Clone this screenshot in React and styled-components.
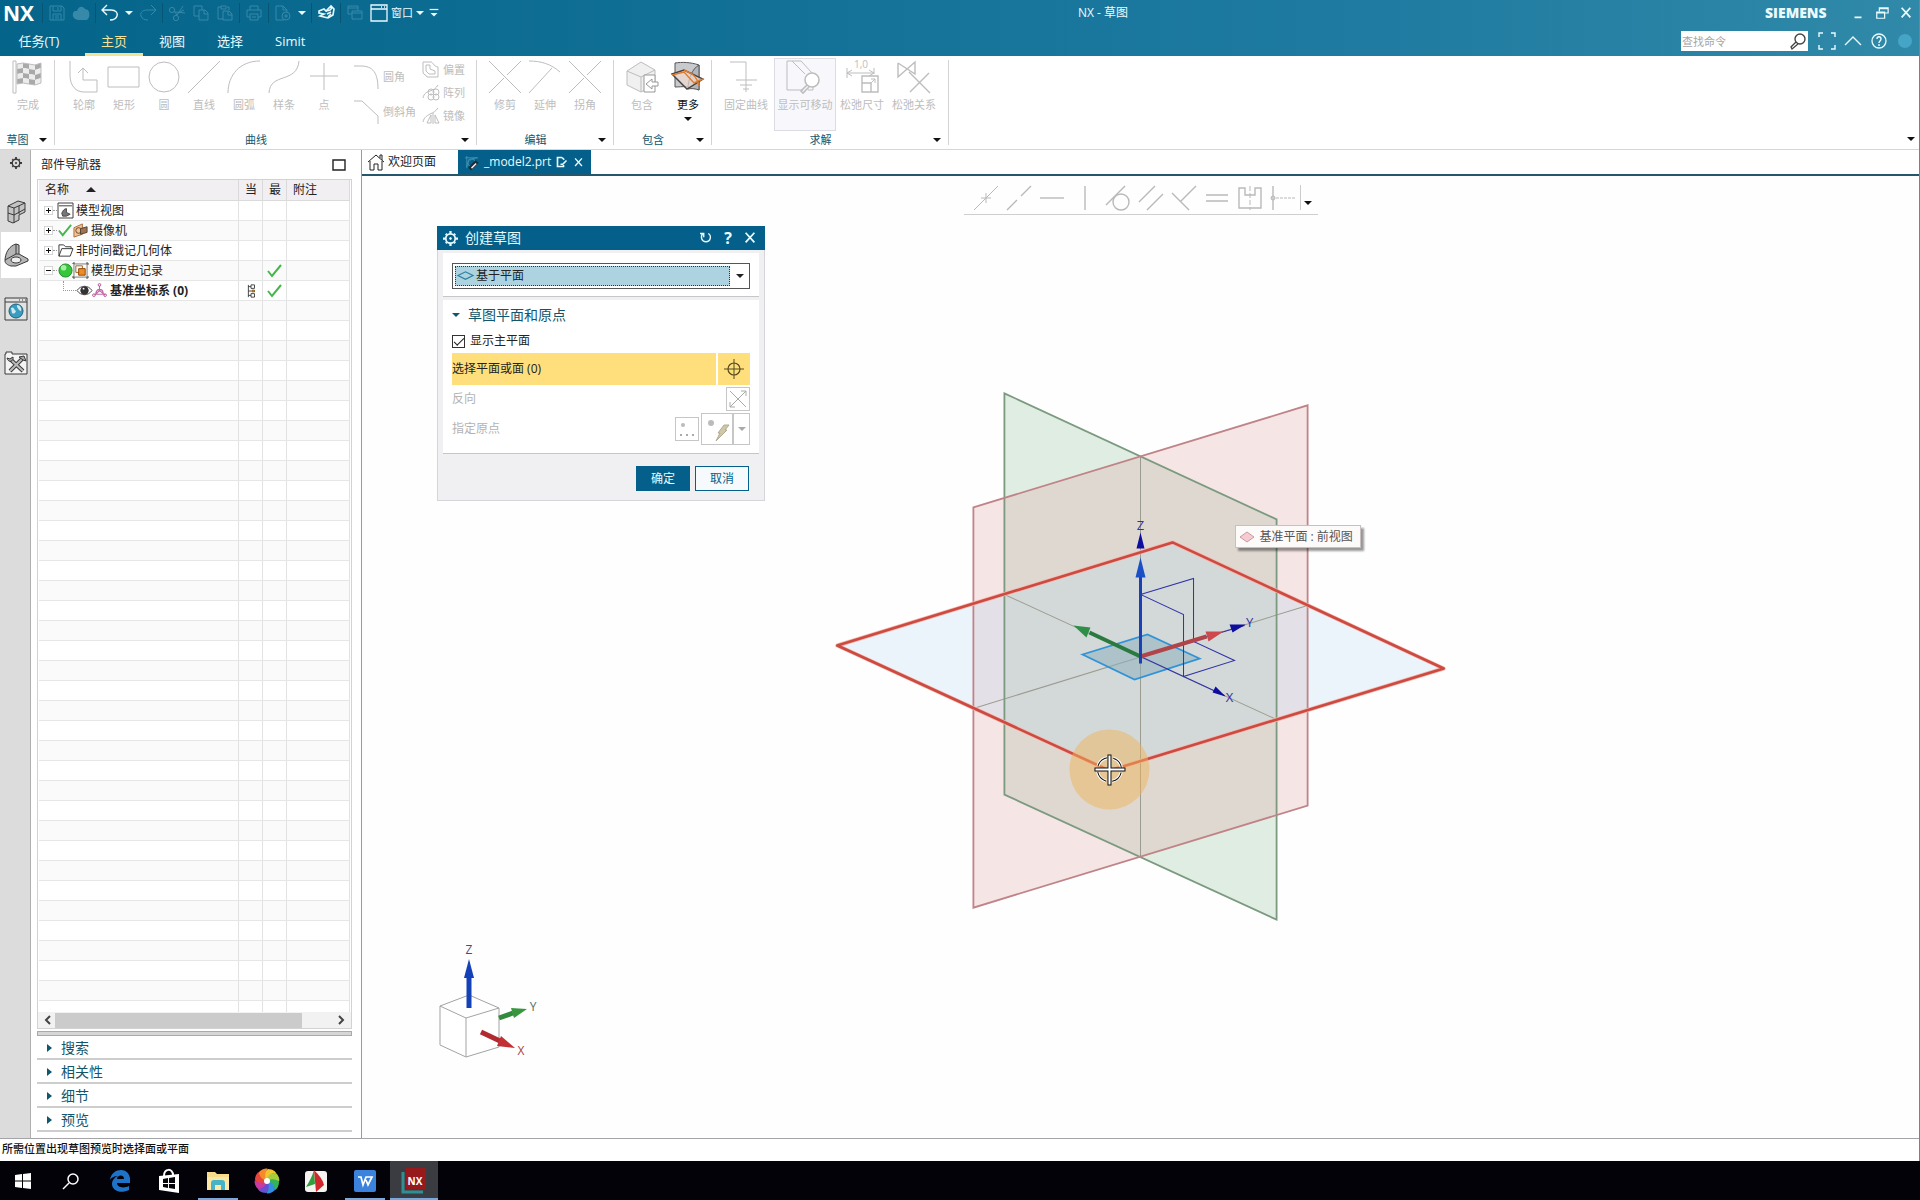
import React, { useState } from 'react';
import styled, { createGlobalStyle } from 'styled-components';

const GlobalStyle = createGlobalStyle`
* {
    box-sizing: border-box;
}
body {
    margin: 0;
    font-family: "Open Sans", "Noto Sans CJK SC", sans-serif;
    font-size: 12px;
    line-height: 16px;
    color: #222;
    background-color: #fff;
    overflow: hidden;
}
button, input, select {
    font: inherit;
    color: inherit;
}
button {
    border: none;
    background: none;
    padding: 0;
    margin: 0;
}
`

const Shell = styled.div`
display: flex;
flex-direction: column;
height: 100vh;
`
const Window = styled.div`
flex: 1;
min-height: 0;
display: flex;
flex-direction: column;
border-right: 1px solid #6d8791;
`

const Glyph = styled.svg`
display: block;
flex: none;
width: ${props => props.$w || 16}px;
height: ${props => props.$h || props.$w || 16}px;
fill: none;
stroke: currentColor;
stroke-width: ${props => props.$stroke || 1};
overflow: visible;
`

const CaretShape = styled.span`
display: block;
flex: none;
border: 4px solid transparent;
border-top-color: currentColor;
border-bottom: none;
`

/* ---------- header ---------- */

const Header = styled.header`
padding-right: 1px;
background: linear-gradient(90deg, #04648a 0%, #0d6c92 25%, #1f7ba1 72%, #3089a8 100%);
color: #e9fbff;
`
const TitleBar = styled.div`
display: flex;
align-items: center;
height: 26px;
`
const Logo = styled.div`
width: 40px;
padding-left: 3px;
font-size: 21px;
line-height: 26px;
font-weight: 700;
color: #fff;
`
const QuickButton = styled.button`
display: flex;
align-items: center;
justify-content: center;
width: ${props => props.$narrow ? 14 : 24}px;
height: 26px;
color: ${props => props.disabled ? '#3789aa' : '#e9fbff'};
`
const QuickLabel = styled.button`
height: 26px;
font-size: 11px;
`
const QuickSeparator = styled.span`
width: 1px;
height: 20px;
margin: 0 2px;
background-color: #075473;
`
const WindowTitle = styled.div`
flex: 1;
text-align: center;
`
const Brand = styled.div`
width: 81px;
font-size: 14px;
line-height: 26px;
font-weight: 800;
`
const MenuBar = styled.div`
display: flex;
align-items: stretch;
height: 30px;
padding-left: 3px;
`
const FileMenu = styled.button`
width: 72px;
margin-right: 10px;
font-size: 13px;
`
const MenuTab = styled.button`
padding: 2px 16px 0;
font-size: 13px;
border-bottom: 3px solid ${props => props.$active ? '#f3e29a' : 'transparent'};
color: ${props => props.$active ? '#f3e29a' : 'inherit'};
`
const HeaderTools = styled.div`
display: flex;
align-items: center;
margin-left: auto;
`
const SearchBox = styled.label`
display: flex;
align-items: center;
width: 127px;
height: 20px;
margin-right: 6px;
padding-right: 2px;
background-color: #fff;
color: #444;
`
const SearchInput = styled.input`
flex: 1;
min-width: 0;
height: 20px;
padding: 0 1px;
border: none;
outline: none;
background: none;
font-size: 11px;
&::placeholder {
    color: #a5a5a5;
}
`
const HeaderButton = styled.button`
display: flex;
align-items: center;
justify-content: center;
width: ${props => props.$w}px;
height: 26px;
`

/* ---------- ribbon ---------- */

const Ribbon = styled.div`
display: flex;
height: 94px;
border-bottom: 1px solid #d6d6d6;
background-color: #fff;
`
const RibbonGroup = styled.section`
position: relative;
display: flex;
flex-direction: column;
padding-top: 2px;
&::after {
    content: '';
    position: absolute;
    right: 0;
    top: 4px;
    bottom: 4px;
    width: 1px;
    background-color: #d4d4d4;
}
`
const GroupContent = styled.div`
display: flex;
flex: 1;
padding: 0 ${props => props.$right}px 0 ${props => props.$left}px;
`
const GroupFooter = styled.div`
display: flex;
align-items: center;
height: 18px;
padding-right: 4px;
font-size: 11px;
color: #10566c;
`
const GroupName = styled.span`
flex: 1;
text-align: center;
`
const GroupCaret = styled.button`
display: flex;
justify-content: center;
width: 16px;
color: #111;
`
const BigButton = styled.button`
display: flex;
flex-direction: column;
align-items: center;
gap: 4px;
width: ${props => props.$w || 40}px;
padding-top: 3px;
font-size: 11px;
white-space: nowrap;
color: ${props => props.$live ? '#111' : '#bdbdbd'};
outline: ${props => props.$boxed ? '1px solid #dcdce4' : 'none'};
outline-offset: -1px;
background-color: ${props => props.$boxed ? '#f8f8fc' : 'transparent'};
`
const SmallColumn = styled.div`
display: flex;
flex-direction: column;
justify-content: ${props => props.$top ? 'flex-start' : 'center'};
margin-left: 7px;
`
const SmallButton = styled.button`
display: flex;
align-items: center;
gap: 4px;
height: ${props => props.$tall ? 35 : 23}px;
font-size: 11px;
color: #bdbdbd;
`
const RibbonEnd = styled.div`
display: flex;
flex: 1;
align-items: flex-end;
justify-content: flex-end;
padding-bottom: 8px;
`

/* ---------- body ---------- */

const Body = styled.div`
flex: 1;
min-height: 0;
display: flex;
`
const Rail = styled.nav`
width: 31px;
background-color: #dcdcdc;
border-right: 1px solid #b0b0b0;
`
const RailButton = styled.button`
display: flex;
align-items: center;
justify-content: center;
width: ${props => props.$active ? 30 : 28}px;
height: ${props => props.$h}px;
margin-left: ${props => props.$active ? 1 : 2}px;
margin-top: ${props => props.$gap || 0}px;
background-color: ${props => props.$active ? '#fff' : 'transparent'};
color: #3a3a3a;
`
const Panel = styled.aside`
display: flex;
flex-direction: column;
width: 331px;
padding: 0 9px 6px 6px;
border-right: 1px solid #9a9aa2;
`
const PanelHeader = styled.div`
display: flex;
align-items: center;
justify-content: space-between;
height: 29px;
padding: 0 7px 0 4px;
`
const TreeBox = styled.div`
flex: 1;
min-height: 0;
overflow: hidden;
border: 1px solid #d2d2d2;
border-bottom: none;
padding: 0 1px;
`
const TreeTable = styled.table`
width: 100%;
table-layout: fixed;
border-collapse: separate;
border-spacing: 0;
`
const Th = styled.th`
height: 21px;
padding: 0 0 0 6px;
font-weight: 400;
text-align: left;
background-color: #f1eff1;
border-right: 1px solid #dadada;
border-bottom: 1px solid #dadada;
`
const Tr = styled.tr`
background-color: ${props => props.$even ? '#fafafa' : '#fff'};
`
const Td = styled.td`
height: 20px;
padding: 0;
border-right: 1px solid #e2e2e2;
border-bottom: 1px solid #e6e6e6;
`
const CellIcon = styled.div`
display: flex;
justify-content: center;
`
const NodeCell = styled.div`
display: flex;
align-items: center;
height: 19px;
padding-left: ${props => props.$child ? 24 : 5}px;
white-space: nowrap;
font-weight: ${props => props.$child ? 700 : 400};
`
const Expander = styled.button`
width: 9px;
height: 9px;
border: 1px solid #d5d5d5;
background-color: #fff;
display: flex;
align-items: center;
justify-content: center;
`
const DotLine = styled.span`
width: ${props => props.$w}px;
margin-right: 1px;
height: ${props => props.$elbow ? 10 : 1}px;
border-bottom: 1px dotted #999;
border-left: ${props => props.$elbow ? '1px dotted #999' : 'none'};
align-self: ${props => props.$elbow ? 'flex-start' : 'center'};
`
const NodeText = styled.span`
margin-left: 3px;
`
const SortMark = styled.span`
display: inline-block;
margin-left: 17px;
vertical-align: 2px;
border: 5px solid transparent;
border-bottom-color: #222;
border-top: none;
`
const ScrollTrack = styled.div`
display: flex;
align-items: center;
height: 17px;
padding: 0 3px;
border: 1px solid #d2d2d2;
border-top: none;
background-color: #f2f2f2;
color: #444;
`
const ScrollThumb = styled.div`
width: 247px;
height: 15px;
margin: 0 auto 0 0;
background-color: #cbcbcb;
`
const ScrollArrow = styled.button`
display: flex;
justify-content: center;
width: 14px;
`
const Splitter = styled.div`
height: 5px;
margin: 2px 0 0;
border: 1px solid #aaa;
background-color: #d6d6d6;
`
const Fold = styled.button`
display: flex;
align-items: center;
gap: 9px;
height: 24px;
padding: 2px 0 0 10px;
border-bottom: 2px solid #cdcdcd;
font-size: 14px;
color: #10566c;
`
const FoldMark = styled.span`
border: 4px solid transparent;
border-left: 5px solid #10566c;
border-right: none;
`

const Main = styled.main`
flex: 1;
min-width: 0;
display: flex;
flex-direction: column;
`
const FileTabs = styled.div`
display: flex;
height: 26px;
border-bottom: 2px solid #24566c;
`
const FileTab = styled.a`
display: flex;
align-items: center;
gap: ${props => props.$active ? 5 : 4}px;
padding: 0 ${props => props.$active ? 7 : 22}px 0 6px;
text-decoration: none;
color: ${props => props.$active ? '#e9fbff' : '#222'};
background-color: ${props => props.$active ? '#04608a' : 'transparent'};
`
const Canvas = styled.div`
position: relative;
flex: 1;
min-height: 0;
background-color: #fefefe;
`
const Scene = styled.svg`
position: absolute;
inset: 0;
width: 100%;
height: 100%;
`
const Triad = styled.svg`
position: absolute;
left: 68px;
bottom: 73px;
width: 120px;
height: 130px;
`
const ConstraintBar = styled.div`
position: relative;
display: flex;
align-items: center;
width: 354px;
height: 34px;
margin: 5px auto 0;
padding-left: 6px;
border-bottom: 1px solid #cfcfcf;
`
const ConstraintButton = styled.button`
display: flex;
justify-content: center;
width: 33px;
color: #b9b9b9;
`
const ConstraintMore = styled.button`
display: flex;
align-items: flex-end;
width: 13px;
height: 25px;
padding: 0 0 5px 3px;
border-left: 1px solid #ccc;
color: #111;
`
const Tooltip = styled.div`
position: absolute;
left: 56.1%;
top: 349px;
display: flex;
align-items: center;
gap: 4px;
height: 23px;
padding: 0 7px 0 3px;
border: 1px solid #c8c0c0;
background-color: #fdfafa;
box-shadow: 3px 3px 2px rgba(0, 0, 0, 0.4);
color: #555;
white-space: nowrap;
`

/* ---------- dialog ---------- */

const Dialog = styled.form`
position: absolute;
left: 75px;
top: 50px;
width: 328px;
border: 1px solid #d4d4da;
border-top: none;
background-color: #f0eff2;
`
const DialogTitle = styled.div`
display: flex;
align-items: center;
height: 24px;
margin: 0 -1px;
padding: 0 4px 0 6px;
background-color: #04608a;
color: #e9fbff;
font-size: 14px;
`
const DialogName = styled.span`
flex: 1;
margin-left: 7px;
`
const DialogTool = styled.button`
display: flex;
align-items: center;
justify-content: center;
width: 22px;
height: 24px;
font-size: 16px;
font-weight: 700;
`
const Card = styled.div`
margin: 3px 5px 0;
padding: ${props => props.$pad};
background-color: #fff;
border-bottom: 1px solid #c6c6ca;
`
const Combo = styled.div`
position: relative;
display: flex;
align-items: center;
height: 26px;
padding: 2px 5px 2px 2px;
border: 1px solid #555;
`
const ComboSelect = styled.select`
flex: 1;
height: 20px;
margin-right: 6px;
padding: 0 0 0 20px;
appearance: none;
border: 1px dotted #333;
border-radius: 0;
outline: none;
background-color: #add3e0;
color: #222;
`
const ComboIcon = styled.span`
position: absolute;
left: 5px;
top: 5px;
color: #2a7f9c;
pointer-events: none;
`
const SectionTitle = styled.button`
display: flex;
align-items: center;
gap: 8px;
height: 29px;
font-size: 14px;
color: #10566c;
`
const FormRow = styled.div`
display: flex;
align-items: center;
height: ${props => props.$h}px;
color: ${props => props.$off ? '#b3b3b3' : '#222'};
`
const RowLabel = styled.label`
flex: 1;
`
const CheckBox = styled.input`
appearance: none;
width: 13px;
height: 13px;
margin: 0 5px 0 0;
border: 1px solid #333;
background-color: #fff;
display: grid;
place-items: center;
&:checked::before {
    content: '';
    width: 9px;
    height: 4px;
    border-left: 1px solid #222;
    border-bottom: 1px solid #222;
    transform: translateY(-1px) rotate(-45deg);
}
`
const PickRow = styled.button`
display: grid;
grid-template-columns: 1fr 32px;
gap: 2px;
width: 100%;
text-align: left;
line-height: 32px;
`
const PickCell = styled.span`
display: flex;
align-items: center;
height: 32px;
background-color: #fedf7c;
${props => props.$center && 'justify-content: center;'}
`
const BoxButton = styled.button`
display: flex;
align-items: center;
justify-content: center;
width: ${props => props.$w}px;
height: ${props => props.$h}px;
margin-left: ${props => props.$gap || 0}px;
border: 1px solid #c6c6c6;
background-color: #fff;
color: #aaa;
`
const DialogFooter = styled.div`
display: flex;
justify-content: flex-end;
gap: 5px;
padding: 12px 15px 9px;
`
const ActionButton = styled.button`
width: 54px;
height: 25px;
border: 1px solid #04608a;
background-color: ${props => props.$primary ? '#04608a' : '#f7fafc'};
color: ${props => props.$primary ? '#e9fbff' : '#04608a'};
`

/* ---------- bottom ---------- */

const StatusBar = styled.footer`
height: 23px;
padding-left: 2px;
border-top: 1px solid #a4a4a8;
font-size: 11px;
line-height: 20px;
color: #111;
font-weight: 500;
background-color: #fff;
`
const TaskBar = styled.div`
display: flex;
gap: 1px;
height: 39px;
background-color: #020208;
`
const TaskButton = styled.button`
position: relative;
display: flex;
align-items: center;
justify-content: center;
width: 48px;
height: 39px;
background-color: ${props => props.$current ? '#3a3c42' : 'transparent'};
color: #fff;
&:first-child {
    width: 46px;
}
&::after {
    content: '';
    position: absolute;
    left: ${props => props.$current ? 0 : 4}px;
    right: ${props => props.$current ? 0 : 4}px;
    bottom: 0;
    height: ${props => props.$running ? 2 : 0}px;
    background-color: #78a9dc;
}
`

/* icon drawings, 16 x 16 unless the entry says otherwise */
const icons = {
    save: <><path d="M1 1H13L15 3V15H1Z" /><path d="M4 1V6H12V1M4 15V9H12V15M6 11H10M6 13H10M9 2V5" /></>,
    cloud: <path d="M2 14C-1 12 -1 7 2 6H4C5 2 9 0 12 4L15 5C17 8 17 13 14 15H5Z" fill="currentColor" stroke="none" />,
    undo: <path d="M5 0L0 5L5 10M0 5H9C14 5 16 8 15 11C14 14 11 15 8 15" strokeWidth="1.4" />,
    redo: <path d="M11 0L16 5L11 10M16 5H7C2 5 0 8 1 11C2 14 5 15 8 15" />,
    cut: <><path d="M6 7L16 8M8 10L14 1" /><circle cx="3" cy="5" r="2.6" /><circle cx="7" cy="13" r="2.6" /><path d="M9 8L15 5M5 6L8 10" /></>,
    copy: <><path d="M1 1H9V11H1Z" /><path d="M6 5H12L15 8V15H6Z" fill="#0a6a90" /><path d="M11 5V9H15" /></>,
    paste: <><path d="M4 2H1V14H6M10 2H12V5M4 1H9V4H4Z" /><path d="M6 6H12L15 9V15H6Z" fill="#0a6a90" /><path d="M11 6V10H15" /></>,
    print: <><path d="M4 5V1H12V5M4 12H1V5H15V12H12" /><path d="M4 9H12V15H4Z" /><path d="M6 12H10" /></>,
    docPlus: <><path d="M9 15H1V1H8L12 5V7" /><path d="M8 1V5H12" /><circle cx="11" cy="11" r="4" /><path d="M11 9V13M9 11H13" /></>,
    touch: <><path d="M1 6L6 4L8 6L13 1L16 4L15 10L10 13L6 12L2 11L6 9L1 8Z" strokeWidth="1.6" /><path d="M8 6L12 5L14 3M9 9L13 7M10 12L13 9" strokeWidth="1.6" /></>,
    stack: <><path d="M1 1H11V9H1ZM1 3H11" /><path d="M5 6H15V14H5Z" fill="#0a6a90" /><path d="M5 8H15" /></>,
    windowFrame: <path d="M0 0H16V16H0ZM0 4H16M10 2H11M13 2H14" strokeWidth="1.3" />,
    overflow: <><path d="M3 4H13" strokeWidth="1.4" /><path d="M4 8H12L8 12Z" fill="currentColor" stroke="none" /></>,
    minimize: <path d="M4 13H12" strokeWidth="2" />,
    restore: <path d="M5 6V2H15V8H11M2 7H11V14H2ZM2 8H11M5 3H15" strokeWidth="1.4" />,
    close: <path d="M3 2L13 13M13 2L3 13" strokeWidth="2" />,
    search: <><circle cx="10" cy="6" r="5" strokeWidth="1.4" /><path d="M6 9L1 14L2 16L8 11" strokeWidth="1.3" /></>,
    expand: <path d="M0 4V0H4M12 0H16V4M16 12V16H12M4 16H0V12" strokeWidth="1.4" />,
    chevronUp: <path d="M0 12L8 4L16 12" strokeWidth="1.4" />,
    help: <><circle cx="8" cy="8" r="7" strokeWidth="1.3" /><path d="M6 6C6 3 10 3 10 6C10 8 8 8 8 10M8 11V13" strokeWidth="1.4" /></>,
    dot: <circle cx="8" cy="8" r="7" fill="#46a5c6" stroke="none" />,
    offset: <><path d="M0 0H8C10 0 10 4 15 5V15H4C4 13 0 13 0 10Z" /><path d="M3 3H7V7L12 9V12H6L3 9Z" /></>,
    pattern: <><path d="M0 13C1 8 4 7 7 6C11 5 13 3 15 0" /><circle cx="8" cy="7" r="3" /><circle cx="13" cy="7" r="3" /><circle cx="8" cy="12" r="3" /><circle cx="13" cy="12" r="3" /></>,
    mirror: <><path d="M0 14C1 9 4 8 7 6C10 5 13 3 15 0" /><path d="M10 5V16M8 7V15H4ZM12 7V15H16Z" /></>,
    gear: <><circle cx="8" cy="8" r="5" strokeWidth="1.8" /><circle cx="8" cy="8" r="1" fill="currentColor" /><path d="M8 0V3M8 13V16M0 8H3M13 8H16M3 3L4 4M12 12L13 13M13 3L12 4M3 13L4 12" strokeWidth="2.4" /></>,
    home: <path d="M0 8L8 1L16 8M2 7V16H6V10H10V16H14V7M12 4V1H14V6" />,
    sketchFile: <><path d="M1 3H15M3 1V14M3 13C3 7 8 3 14 3" stroke="#3f93b5" /><circle cx="8" cy="8" r="4" stroke="#3f93b5" /><path d="M6 15L14 7" stroke="#1d2a33" strokeWidth="4.5" /><path d="M8 14L13 9" stroke="#e8eef2" strokeWidth="1.6" /></>,
    docEdit: <path d="M8 2H2V14H10V12M8 2L11 5M6 11H9L14 6" strokeWidth="2.2" />,
    plane: <path d="M0 7L8 3L16 7L8 11Z" strokeWidth="1.3" />,
    reset: <path d="M11 2C16 5 14 13 8 13C2 13 0 6 4 2M0 2H5V7" strokeWidth="1.8" />,
    check: <path d="M1 8L5 13L14 2" stroke="#45b649" strokeWidth="2" />,
    view: <><path d="M0 0H16V16H0ZM1 3H15" stroke="#333" /><path d="M4 11C5 8 7 6 9 6V10L13 12L9 14H5Z" fill="#777" stroke="#444" /></>,
    camera: <><path d="M1 5L10 1V12L1 15Z" fill="#f0c398" stroke="#a86c35" /><circle cx="6" cy="8" r="3" stroke="#6b4420" /><path d="M8 6L15 4V10L8 12Z" fill="#9b7455" stroke="#54402f" /></>,
    folder: <path d="M1 14V2H6L8 4H14V6M1 14L4 6H16L13 14Z" stroke="#333" />,
    ball: <><circle cx="8" cy="8" r="7" fill="#35c63c" stroke="#238a2a" /><circle cx="6" cy="5" r="3" fill="#a4f0a0" stroke="none" /></>,
    history: <><path d="M1 1H15V15H1Z" stroke="#777" /><path d="M0 1V0H2M14 0H16V2M16 14V16H14M2 16H0V14" stroke="#333" /><path d="M3 3H10V10H3Z" fill="#fff" stroke="#a85a10" /><path d="M6 6H13V13H6Z" fill="#f08a22" stroke="#8a4508" /></>,
    eye: <><path d="M0 8C4 2 12 2 16 8C12 14 4 14 0 8Z" stroke="#444" /><circle cx="8" cy="8" r="4" fill="#333" stroke="#333" /><circle cx="7" cy="6" r="1" fill="#fff" stroke="none" /></>,
    csys: <><path d="M8 3V8M8 8L3 13M8 8L14 13M4 12C4 5 12 5 12 12M3 12H13" stroke="#c06aa8" strokeWidth="1.2" /><circle cx="8" cy="2" r="1.4" stroke="#b05090" /><circle cx="2" cy="13" r="1.4" stroke="#b05090" /><circle cx="14" cy="13" r="1.4" stroke="#b05090" /></>,
    tree: <><path d="M5 1V15M5 3H8M5 8H8M5 13H8" stroke="#333" /><path d="M8 1H12V5H8ZM8 11H12V15H8Z" stroke="#333" /><path d="M9 7H12V9H9Z" fill="#e8a33a" stroke="#7a5010" /></>,
};

const Icon = ({ name, size }) => (
    <Glyph viewBox="0 0 16 16" $w={size || 16} aria-hidden="true">{icons[name]}</Glyph>
)

const flagCells = [];
for (let c = 0; c < 4; c++) {
    for (let r = 0; r < 4; r++) {
        const x = 5 + c * 6;
        const y = [3, 2, 3, 4][c] + r * 5;
        const y2 = [2, 3, 4, 2][c] + r * 5;
        flagCells.push(
            <path key={c + '-' + r} stroke="none" fill={(c + r) % 2 ? '#a9a9a9' : '#ececec'} d={`M${x} ${y}L${x + 6} ${y2}V${y2 + 5}L${x} ${y + 5}Z`} />
        );
    }
}

/* 32 x 32 ribbon drawings */
const bigIcons = {
    finish: <>{flagCells}<path d="M1 0H4V32H1ZM5 3L11 2L17 3L23 4L29 2V22L23 24L17 23L11 22L5 23Z" /></>,
    profile: <path d="M2 0V14C2 25 8 31 16 31H29V19H15V7M10 12L15 7L20 12" />,
    rect: <path d="M0 6H31V26H0Z" />,
    circle: <circle cx="16" cy="16" r="15" />,
    line: <path d="M0 32L32 0" />,
    arc: <path d="M0 32C0 14 12 0 32 0" />,
    spline: <path d="M1 32C2 11 29 23 31 0" />,
    point: <path d="M16 2V29M2 15H30" />,
    trim: <path d="M0 0L32 32M32 0L18 14M15 17L0 32" />,
    extend: <path d="M0 0C12 0 22 3 31 11M0 32L23 7" />,
    corner: <path d="M0 0L32 32M32 0L18 14M15 17L0 32" />,
    include: <><path d="M1 10L15 1L29 9V24L15 31L1 24Z" fill="#f0f0f0" /><path d="M1 10L15 16L29 9M15 16V31" /><path d="M18 14H29V31H18Z" fill="#fff" stroke="#999" /><path d="M32 21H26V18L20 23L26 28V25H32Z" fill="#fff" stroke="#999" /></>,
    more: <>
        <path d="M3 2C10 1 18 1 27 4V29C18 24 10 26 3 26Z" fill="#c9cace" stroke="#555" />
        <path d="M27 4C20 8 16 18 16 28C20 27 24 28 27 29Z" fill="#b3b5ba" stroke="#555" />
        <path d="M0 13L12 9L31 18L15 28Z" fill="#f1ddd2" fillOpacity="0.7" stroke="#444" strokeWidth="1.4" />
        <path d="M12 9L20 13C24 16 26 20 27 25M0 14L12 11L22 22L31 18" stroke="#e07b2e" strokeWidth="1.4" />
    </>,
    fixed: <path d="M0 1H16V18M6 19H27M10 24H22M13 28H19M16 18V31" />,
    movable: <><path d="M-2 0H12L24 13M-2 0V29H14M24 24V29H19" fill="none" /><path d="M3 0L16 13" /><circle cx="23" cy="19" r="7" fill="#fff" strokeWidth="1.6" /><path d="M18 24L12 30L14 32L20 26" strokeWidth="1.6" /></>,
    relaxDim: <><path d="M1 7V17M28 7V13M1 12H28M6 9L1 12L6 15M23 9L28 12L23 15" /><path d="M16 15H32V31H16ZM16 22H25V31" strokeWidth="1.4" /><path d="M24 23L29 18M25 18H29V22" /><text x="8" y="7" fontSize="10" fill="#bdbdbd" stroke="none">1,0</text></>,
    relaxRel: <path d="M0 2V16L17 1V13L0 2M11 11L32 32M31 12L12 31" strokeWidth="1.4" />,
};

const BigIcon = ({ name }) => (
    <Glyph viewBox="0 0 32 32" $w={32} aria-hidden="true">{bigIcons[name]}</Glyph>
)

const Group = (props) => (
    <RibbonGroup>
        <GroupContent $left={props.left} $right={props.right}>{props.children}</GroupContent>
        <GroupFooter>
            <GroupName>{props.name}</GroupName>
            <GroupCaret aria-label={props.name}><CaretShape /></GroupCaret>
        </GroupFooter>
    </RibbonGroup>
)

const curveTools = [
    ['profile', '轮廓'], ['rect', '矩形'], ['circle', '圆'], ['line', '直线'],
    ['arc', '圆弧'], ['spline', '样条'], ['point', '点'],
];
const editTools = [['trim', '修剪'], ['extend', '延伸'], ['corner', '拐角']];

const quickTools = [
    '|', 'save', 'cloud', '|', 'undo*', 'v', 'redo', '|', 'cut', 'copy', 'paste', '|', 'print', '|',
    'docPlus', 'v', '|', 'touch*', '|', 'stack', 'windowFrame*',
];

const TopHeader = () => (
    <Header>
        <TitleBar>
            <Logo>NX</Logo>
            {quickTools.map((tool, i) => {
                if (tool === '|') return <QuickSeparator key={i} />;
                if (tool === 'v') return <QuickButton key={i} $narrow aria-label="more"><CaretShape /></QuickButton>;
                const name = tool.replace('*', '');
                return (
                    <QuickButton key={i} disabled={!tool.endsWith('*')} aria-label={name}>
                        <Icon name={name} />
                    </QuickButton>
                );
            })}
            <QuickLabel>窗口</QuickLabel>
            <QuickButton $narrow aria-label="window list"><CaretShape /></QuickButton>
            <QuickButton $narrow aria-label="customize"><Icon name="overflow" size={14} /></QuickButton>
            <WindowTitle>NX - 草图</WindowTitle>
            <Brand>SIEMENS</Brand>
            <HeaderButton $w={24} aria-label="minimize"><Icon name="minimize" size={14} /></HeaderButton>
            <HeaderButton $w={24} aria-label="restore"><Icon name="restore" size={14} /></HeaderButton>
            <HeaderButton $w={24} aria-label="close"><Icon name="close" size={14} /></HeaderButton>
        </TitleBar>
        <MenuBar>
            <FileMenu>任务(T)</FileMenu>
            <MenuTab $active>主页</MenuTab>
            <MenuTab>视图</MenuTab>
            <MenuTab>选择</MenuTab>
            <MenuTab>Simit</MenuTab>
            <HeaderTools>
                <SearchBox>
                    <SearchInput placeholder="查找命令" />
                    <Icon name="search" />
                </SearchBox>
                <HeaderButton $w={26} aria-label="full screen"><Icon name="expand" /></HeaderButton>
                <HeaderButton $w={26} aria-label="collapse"><Icon name="chevronUp" /></HeaderButton>
                <HeaderButton $w={26} aria-label="help"><Icon name="help" /></HeaderButton>
                <HeaderButton $w={26} aria-label="status"><Icon name="dot" /></HeaderButton>
            </HeaderTools>
        </MenuBar>
    </Header>
)

const RibbonBar = () => (
    <Ribbon>
        <Group name="草图" left={8} right={7}>
            <BigButton><BigIcon name="finish" />完成</BigButton>
        </Group>
        <Group name="曲线" left={9} right={12}>
            {curveTools.map(([icon, label]) => (
                <BigButton key={icon}><BigIcon name={icon} />{label}</BigButton>
            ))}
            <SmallColumn>
                <SmallButton $tall>
                    <Glyph viewBox="0 0 28 25" $w={28} $h={25}><path d="M3 1H10C22 1 27 8 27 24" /></Glyph>圆角
                </SmallButton>
                <SmallButton $tall>
                    <Glyph viewBox="0 0 28 25" $w={28} $h={25}><path d="M3 1H11L27 16V24" /></Glyph>倒斜角
                </SmallButton>
            </SmallColumn>
            <SmallColumn $top>
                <SmallButton><Icon name="offset" />偏置</SmallButton>
                <SmallButton><Icon name="pattern" />阵列</SmallButton>
                <SmallButton><Icon name="mirror" />镜像</SmallButton>
            </SmallColumn>
        </Group>
        <Group name="编辑" left={8} right={9}>
            {editTools.map(([icon, label]) => (
                <BigButton key={icon}><BigIcon name={icon} />{label}</BigButton>
            ))}
        </Group>
        <Group name="包含" left={5} right={1}>
            <BigButton $w={46}><BigIcon name="include" />包含</BigButton>
            <BigButton $w={46} $live><BigIcon name="more" />更多<CaretShape /></BigButton>
        </Group>
        <Group name="求解" left={6} right={9}>
            <BigButton $w={56}><BigIcon name="fixed" />固定曲线</BigButton>
            <BigButton $w={62} $boxed><BigIcon name="movable" />显示可移动</BigButton>
            <BigButton $w={52}><BigIcon name="relaxDim" />松弛尺寸</BigButton>
            <BigButton $w={52}><BigIcon name="relaxRel" />松弛关系</BigButton>
        </Group>
        <RibbonEnd><GroupCaret aria-label="ribbon options"><CaretShape /></GroupCaret></RibbonEnd>
    </Ribbon>
)

const SideRail = () => (
    <Rail>
        <RailButton $h={26} aria-label="settings"><Icon name="gear" size={12} /></RailButton>
        <RailButton $h={40} $gap={16} aria-label="assembly navigator">
            <Glyph viewBox="0 0 24 24" $w={24}>
                <path d="M4 6L14 1L21 3V12L15 15V20L9 23L4 21Z" fill="#c4c4c4" />
                <path d="M4 6L10 8L21 3M10 8V23M4 13L10 15L21 9M15 6V14" />
            </Glyph>
        </RailButton>
        <RailButton $h={46} $active aria-label="part navigator">
            <Glyph viewBox="0 0 24 24" $w={24}>
                <path d="M1 18C1 10 5 3 12 1L15 2V11L24 16V18L12 23H7C3 22 1 20 1 18Z" fill="#b5b5b5" />
                <path d="M1 17L12 11H15M12 1V11" />
                <ellipse cx="12" cy="17" rx="5" ry="3" fill="#eee" />
            </Glyph>
        </RailButton>
        <RailButton $h={61} aria-label="web browser">
            <Glyph viewBox="0 0 24 24" $w={24}>
                <path d="M1 1H23V23H1ZM1 5H23" fill="#e2e2e2" />
                <path d="M15 3H16M18 3H19M21 3H22" />
                <circle cx="12" cy="14" r="7" fill="#3a9cc0" stroke="#20607a" />
                <path d="M7 11C10 9 10 13 12 14C11 17 9 17 8 16ZM13 8C16 8 18 11 17 14C15 14 14 11 13 10Z" fill="#cdeaf2" stroke="none" />
            </Glyph>
        </RailButton>
        <RailButton $h={48} aria-label="tools">
            <Glyph viewBox="0 0 24 24" $w={24}>
                <path d="M1 3H2V1H8V3H23V23H1Z" fill="#f4f4f4" />
                <path d="M6 20L18 8M6 8L19 20" strokeWidth="4" />
                <path d="M6 20L18 8M6 8L19 20" stroke="#bbb" strokeWidth="2" />
                <path d="M3 7C4 12 10 11 9 6L6 8ZM15 6L20 5L22 10L19 9Z" fill="#aaa" />
            </Glyph>
        </RailButton>
    </Rail>
)

const treeRows = [
    { text: '模型视图', sign: '+', glyphs: ['view'] },
    { text: '摄像机', sign: '+', glyphs: ['check', 'camera'] },
    { text: '非时间戳记几何体', sign: '+', glyphs: ['folder'] },
    { text: '模型历史记录', sign: '-', glyphs: ['ball', 'history'], latest: true },
    { text: '基准坐标系 (0)', child: true, glyphs: ['eye', 'csys'], current: true, latest: true },
];
while (treeRows.length < 41) treeRows.push({});

const TreeNode = ({ row }) => (
    <NodeCell $child={row.child}>
        {row.child ? <DotLine $w={13} $elbow /> : (
            <>
                <Expander aria-label={row.text}>
                    <Glyph viewBox="0 0 7 7" $w={7}><path d={row.sign === '+' ? 'M1 3.5H6M3.5 1V6' : 'M1 3.5H6'} stroke="#111" /></Glyph>
                </Expander>
                <DotLine $w={4} />
            </>
        )}
        {row.glyphs.map(name => <Icon key={name} name={name} size={15} />)}
        <NodeText>{row.text}</NodeText>
    </NodeCell>
)

const Navigator = () => (
    <Panel>
        <PanelHeader>
            部件导航器
            <button aria-label="maximize">
                <Glyph viewBox="0 0 12 12" $w={12}><path d="M0 1H12V11H0Z" strokeWidth="1.4" /></Glyph>
            </button>
        </PanelHeader>
        <TreeBox>
            <TreeTable>
                <colgroup>
                    <col />
                    <col width="24" />
                    <col width="24" />
                    <col width="63" />
                </colgroup>
                <thead>
                    <tr>
                        <Th>名称<SortMark /></Th>
                        <Th>当</Th>
                        <Th>最</Th>
                        <Th>附注</Th>
                    </tr>
                </thead>
                <tbody>
                    {treeRows.map((row, i) => (
                        <Tr key={i} $even={i % 2 === 1}>
                            <Td>{row.text && <TreeNode row={row} />}</Td>
                            <Td>{row.current && <CellIcon><Icon name="tree" size={14} /></CellIcon>}</Td>
                            <Td>{row.latest && <CellIcon><Icon name="check" /></CellIcon>}</Td>
                            <Td />
                        </Tr>
                    ))}
                </tbody>
            </TreeTable>
        </TreeBox>
        <ScrollTrack>
            <ScrollArrow aria-label="scroll left"><Glyph viewBox="0 0 8 8" $w={8} $stroke={2}><path d="M6 0L2 4L6 8" /></Glyph></ScrollArrow>
            <ScrollThumb />
            <ScrollArrow aria-label="scroll right"><Glyph viewBox="0 0 8 8" $w={8} $stroke={2}><path d="M2 0L6 4L2 8" /></Glyph></ScrollArrow>
        </ScrollTrack>
        <Splitter />
        {['搜索', '相关性', '细节', '预览'].map(name => (
            <Fold key={name}><FoldMark />{name}</Fold>
        ))}
    </Panel>
)

const constraints = [
    <path d="M0 24L24 0M7 12H12V17M12 7V12H17" />,
    <path d="M0 24L10 14M14 10L24 0" strokeWidth="1.4" />,
    <path d="M0 12H24" strokeWidth="1.4" />,
    <path d="M12 0V24" strokeWidth="1.4" />,
    <><path d="M0 19L19 0" strokeWidth="1.4" /><circle cx="15" cy="16" r="8" strokeWidth="1.4" /></>,
    <path d="M0 16L16 0M8 24L24 8" strokeWidth="1.4" />,
    <path d="M0 7L17 24M8 16L24 0" strokeWidth="1.4" />,
    <path d="M1 9H23M1 15H23" strokeWidth="1.4" />,
    <><path d="M1 2H7V9H17V2H23V22H1Z" strokeWidth="1.4" /><path d="M12 0V24" strokeDasharray="5 2" /></>,
    <><path d="M2 0V24" strokeWidth="1.4" /><circle cx="2" cy="12" r="2" fill="#ccc" /><path d="M5 12H24" strokeDasharray="3 1" /></>,
];

/* datum planes, axes and the pick cursor */
const DatumScene = () => (
    <Scene viewBox="362 176 1556 961" fill="none" aria-hidden="true">
        <path d="M1004 393L1276 519V919L1004 794Z" fill="#e0ede3" />
        <path d="M973 507L1307 405V805L973 907Z" fill="#db9b9b" fillOpacity="0.25" />
        <path d="M837 645L1172 542L1443 668L1109 770Z" fill="#afd7ef" fillOpacity="0.25" />
        <path d="M1140 456V857M1004 594L1276 719M973 708L1307 605" stroke="#9b9c90" />
        <path d="M1004 393L1276 519V919L1004 794Z" stroke="#7b9a7f" strokeWidth="1.8" />
        <path d="M973 507L1307 405V805L973 907Z" stroke="#c08387" strokeWidth="1.8" />
        <path d="M837 645L1172 542L1443 668L1109 770Z" stroke="#f8b5aa" strokeWidth="4" strokeLinejoin="round" />
        <path d="M837 645L1172 542L1443 668L1109 770Z" stroke="#cb4a41" strokeWidth="2.6" strokeLinejoin="round" />
        <path d="M1082 654L1147 634L1199 658L1134 679Z" fill="#8fb0be" fillOpacity="0.55" stroke="#2f93d8" strokeWidth="1.8" />
        <path d="M1140 594L1193 578V641L1234 660L1183 676V614Z" stroke="#3032a8" />
        <path d="M1140 656L1224 695M1140 656L1244 625" stroke="#3032a8" />
        <path d="M1212 692L1215 686L1225 696ZM1229 624L1232 632L1245 624ZM1140 532L1144 548H1136Z" fill="#0d0da0" />
        <path d="M1140 656L1089 632" stroke="#2a7a40" strokeWidth="4" />
        <path d="M1073 625L1090 627L1086 637Z" fill="#2f8f48" />
        <path d="M1140 656L1206 636" stroke="#b04448" strokeWidth="4" />
        <path d="M1223 631L1205 631L1208 641Z" fill="#cc4a4e" />
        <path d="M1140 576V663" stroke="#1c3fb4" strokeWidth="3" />
        <path d="M1140 557L1145 577H1135Z" fill="#1b4fc8" />
        <g fontFamily="Open Sans, sans-serif" fontSize="13" fill="#3032a8" textAnchor="middle">
            <text x="1140" y="530">Z</text>
            <text x="1249" y="627">Y</text>
            <text x="1229" y="701">X</text>
        </g>
        <circle cx="1109" cy="769" r="40" fill="#f0b45c" fillOpacity="0.5" />
        <circle cx="1109" cy="769" r="12" stroke="#fff" strokeWidth="3" strokeDasharray="13 6" strokeDashoffset="-3" />
        <circle cx="1109" cy="769" r="12" stroke="#111" strokeDasharray="13 6" strokeDashoffset="-3" />
        <path d="M1094 769H1125M1109 754V785" stroke="#111" strokeWidth="4" />
        <path d="M1095 769H1124M1109 755V784" stroke="#fff" strokeWidth="2" />
    </Scene>
)

const ViewTriad = () => (
    <Triad viewBox="430 935 120 130" fill="none" aria-hidden="true">
        <path d="M440 1006L469 995L499 1008V1047L466 1057L440 1045ZM440 1006L466 1018L499 1008M466 1018V1057" stroke="#a3a3a3" fill="#fff" />
        <path d="M469 976V1008" stroke="#1440b8" strokeWidth="5" />
        <path d="M469 959L474 978H464Z" fill="#1440b8" />
        <path d="M499 1018L513 1013" stroke="#338a3c" strokeWidth="5" />
        <path d="M527 1009L511 1008L514 1018Z" fill="#38963f" />
        <path d="M481 1032L500 1041" stroke="#b02a30" strokeWidth="5" />
        <path d="M515 1048L501 1036L497 1046Z" fill="#c22f35" />
        <g fontFamily="Open Sans, sans-serif" fontSize="12" textAnchor="middle">
            <text x="469" y="954" fill="#4a4a80">Z</text>
            <text x="533" y="1011" fill="#557060">Y</text>
            <text x="521" y="1055" fill="#b04040">X</text>
        </g>
    </Triad>
)

const SketchDialog = () => {
    const [mainPlanes, setMainPlanes] = useState(true);
    return (
        <Dialog onSubmit={e => e.preventDefault()}>
            <DialogTitle>
                <Icon name="gear" size={15} />
                <DialogName>创建草图</DialogName>
                <DialogTool type="button" aria-label="reset"><Icon name="reset" size={12} /></DialogTool>
                <DialogTool type="button">?</DialogTool>
                <DialogTool type="button" aria-label="close"><Icon name="close" size={14} /></DialogTool>
            </DialogTitle>
            <Card $pad="10px 9px 7px">
                <Combo>
                    <ComboSelect aria-label="草图类型" defaultValue="plane">
                        <option value="plane">基于平面</option>
                    </ComboSelect>
                    <ComboIcon><Icon name="plane" size={15} /></ComboIcon>
                    <CaretShape />
                </Combo>
            </Card>
            <Card $pad="0 9px 8px">
                <SectionTitle type="button"><CaretShape />草图平面和原点</SectionTitle>
                <FormRow $h={24}>
                    <CheckBox id="main-planes" type="checkbox" checked={mainPlanes} onChange={e => setMainPlanes(e.target.checked)} />
                    <RowLabel htmlFor="main-planes">显示主平面</RowLabel>
                </FormRow>
                <PickRow type="button">
                    <PickCell>选择平面或面 (0)</PickCell>
                    <PickCell $center>
                        <Glyph viewBox="0 0 20 20" $w={20}><circle cx="10" cy="10" r="6" stroke="#554a1c" strokeWidth="1.2" /><path d="M10 0V20M0 10H20" stroke="#554a1c" /></Glyph>
                    </PickCell>
                </PickRow>
                <FormRow $h={28} $off>
                    <RowLabel htmlFor="reverse">反向</RowLabel>
                    <BoxButton id="reverse" type="button" $w={24} $h={24}>
                        <Glyph viewBox="0 0 16 16" $w={16}><path d="M0 0L16 16M0 16L16 0M11 0H16V5M0 11V16H5" /></Glyph>
                    </BoxButton>
                </FormRow>
                <FormRow $h={32} $off>
                    <RowLabel htmlFor="origin">指定原点</RowLabel>
                    <BoxButton id="origin" type="button" $w={24} $h={24}>
                        <Glyph viewBox="0 0 16 16" $w={16}><circle cx="4" cy="4" r="2" fill="#bbb" stroke="none" /><path d="M1 14H3M7 14H9M13 14H15" strokeWidth="2" /></Glyph>
                    </BoxButton>
                    <BoxButton type="button" $w={32} $h={32} $gap={2} aria-label="推断点">
                        <Glyph viewBox="0 0 24 24" $w={24}>
                            <circle cx="6" cy="6" r="3" fill="#bbb" stroke="none" />
                            <path d="M19 8H24L20 13H22L11 24L15 16H13Z" fill="#cfc8a8" stroke="#b0aa92" />
                        </Glyph>
                    </BoxButton>
                    <BoxButton type="button" $w={17} $h={32} aria-label="点选项"><CaretShape /></BoxButton>
                </FormRow>
            </Card>
            <DialogFooter>
                <ActionButton type="submit" $primary>确定</ActionButton>
                <ActionButton type="button">取消</ActionButton>
            </DialogFooter>
        </Dialog>
    )
}

const Workspace = () => (
    <Main>
        <FileTabs>
            <FileTab href="#welcome"><Icon name="home" />欢迎页面</FileTab>
            <FileTab href="#model" $active>
                <Icon name="sketchFile" size={15} />_model2.prt
                <Icon name="docEdit" size={12} />
                <Icon name="close" size={11} />
            </FileTab>
        </FileTabs>
        <Canvas>
            <DatumScene />
            <ViewTriad />
            <ConstraintBar>
                {constraints.map((shape, i) => (
                    <ConstraintButton key={i} aria-label={'constraint ' + (i + 1)}>
                        <Glyph viewBox="0 0 24 24" $w={24}>{shape}</Glyph>
                    </ConstraintButton>
                ))}
                <ConstraintMore aria-label="more constraints"><CaretShape /></ConstraintMore>
            </ConstraintBar>
            <Tooltip role="tooltip">
                <Glyph viewBox="0 0 16 12" $w={16} $h={12}><path d="M1 6L8 1L15 6L8 11Z" fill="#f6ccd2" stroke="#c99aa0" /></Glyph>
                基准平面 : 前视图
            </Tooltip>
            <SketchDialog />
        </Canvas>
    </Main>
)

const wheel = ['#f2c52e', '#f58a2c', '#e8453c', '#c93aa0', '#6a4fd0', '#2f8fe0', '#36b35a', '#a5cc3a'];

const Tasks = () => (
    <TaskBar>
        <TaskButton aria-label="start">
            <Glyph viewBox="0 0 16 16" $w={16}><path d="M0 2L7 1V7.500H0ZM8 1L16 0V7.500H8ZM0 8.500H7V15L0 14ZM8 8.500H16V16L8 15Z" fill="#fff" stroke="none" /></Glyph>
        </TaskButton>
        <TaskButton aria-label="search">
            <Glyph viewBox="0 0 16 16" $w={16} $stroke={1.5}><circle cx="10" cy="6" r="5" /><path d="M6 10L0 16" /></Glyph>
        </TaskButton>
        <TaskButton aria-label="edge">
            <Glyph viewBox="0 0 22 22" $w={22}>
                <path d="M1 10C2 3 7 0 12 0C18 0 21 5 21 9V13H8C8 17 14 19 20 16V20C12 24 3 21 3 14C3 10 6 7 9 6C5 6 2 8 1 10ZM8 9H15C15 4 8 5 8 9Z" fill="#1e72c8" stroke="none" />
            </Glyph>
        </TaskButton>
        <TaskButton aria-label="store">
            <Glyph viewBox="0 0 22 24" $w={22} $h={24}>
                <path d="M1 7L21 5V24L1 21Z" fill="#fff" stroke="none" />
                <path d="M6 7C6 -1 15 -1 15 6" stroke="#fff" strokeWidth="2" />
                <path d="M5 10L10 9V14H5ZM11 9L17 8V14H11ZM5 15H10V19L5 18ZM11 15H17V20L11 19Z" fill="#05050a" stroke="none" />
            </Glyph>
        </TaskButton>
        <TaskButton $running aria-label="explorer">
            <Glyph viewBox="0 0 22 20" $w={22} $h={20}>
                <path d="M0 1H8L10 3H22V19H0Z" fill="#f7dc8c" stroke="none" />
                <path d="M0 6H22V19H0Z" fill="#fbe7a6" stroke="none" />
                <path d="M4 19V12C4 10 5 9 7 9H15C17 9 18 10 18 12V19H14V14H8V19Z" fill="#46b4c6" stroke="none" />
            </Glyph>
        </TaskButton>
        <TaskButton aria-label="color picker">
            <Glyph viewBox="0 0 24 24" $w={24}>
                {wheel.map((color, i) => (
                    <path key={color} d="M12 12C8 8 9 2 13 0C18 0 21 3 21 4C17 4 13 7 12 12Z" fill={color} stroke="none" transform={`rotate(${-i * 45} 12 12)`} />
                ))}
                <circle cx="12" cy="12" r="3" fill="#fff" stroke="none" />
            </Glyph>
        </TaskButton>
        <TaskButton aria-label="kite">
            <Glyph viewBox="0 0 22 22" $w={22}>
                <rect x="0" y="1" width="22" height="21" rx="3" fill="#f6f4f0" stroke="none" />
                <path d="M9 0C7 7 4 12 1 17L10 14Z" fill="#2f9e3f" stroke="none" />
                <path d="M9 0C14 5 18 10 19 15L11 22Z" fill="#d0262c" stroke="none" />
            </Glyph>
        </TaskButton>
        <TaskButton $running aria-label="wps">
            <Glyph viewBox="0 0 22 22" $w={22}>
                <rect x="0" y="0" width="22" height="22" rx="2" fill="#3a82dc" stroke="none" />
                <path d="M4 7H7L9 15L12 7H18L14 15L12 10" stroke="#fff" strokeWidth="1.7" />
            </Glyph>
        </TaskButton>
        <TaskButton $running $current aria-label="nx">
            <Glyph viewBox="0 0 24 24" $w={24}>
                <path d="M1 3V23H21" stroke="#2f8f92" strokeWidth="3" />
                <rect x="4" y="-1" width="20" height="21" fill="#96191c" stroke="none" />
                <text x="13" y="16" fontSize="10" fontWeight="700" textAnchor="middle" fill="#fff" stroke="none">NX</text>
            </Glyph>
        </TaskButton>
    </TaskBar>
)

const App = () => (
    <Shell>
        <GlobalStyle />
        <Window>
            <TopHeader />
            <RibbonBar />
            <Body>
                <SideRail />
                <Navigator />
                <Workspace />
            </Body>
            <StatusBar>所需位置出现草图预览时选择面或平面</StatusBar>
        </Window>
        <Tasks />
    </Shell>
)

export default App;
